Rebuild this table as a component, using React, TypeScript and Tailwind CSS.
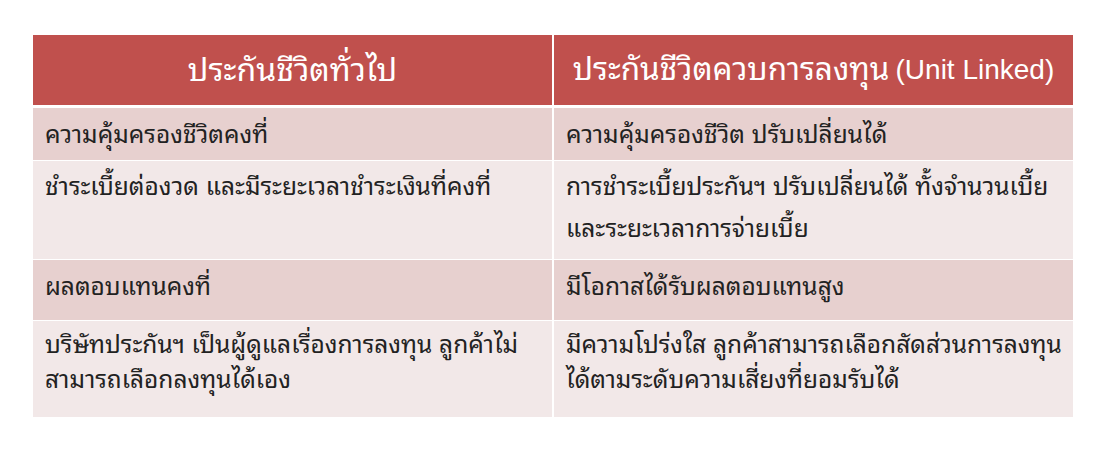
const rows = [
  {
    left: ['ความคุ้มครองชีวิตคงที่'],
    right: ['ความคุ้มครองชีวิต ปรับเปลี่ยนได้'],
    h: 'h-[52px]',
    bg: 'bg-[#e7d0cf]',
    lead: 'leading-[42px] pt-[6px]',
  },
  {
    left: ['ชำระเบี้ยต่องวด และมีระยะเวลาชำระเงินที่คงที่'],
    right: ['การชำระเบี้ยประกันฯ ปรับเปลี่ยนได้ ทั้งจำนวนเบี้ย', 'และระยะเวลาการจ่ายเบี้ย'],
    h: 'h-[98px]',
    bg: 'bg-[#f2e8e8]',
    lead: 'leading-[42px] pt-[5px]',
  },
  {
    left: ['ผลตอบแทนคงที่'],
    right: ['มีโอกาสได้รับผลตอบแทนสูง'],
    h: 'h-[60px]',
    bg: 'bg-[#e7d0cf]',
    lead: 'leading-[42px] pt-[6px]',
  },
  {
    left: ['บริษัทประกันฯ เป็นผู้ดูแลเรื่องการลงทุน ลูกค้าไม่', 'สามารถเลือกลงทุนได้เอง'],
    right: ['มีความโปร่งใส ลูกค้าสามารถเลือกสัดส่วนการลงทุน', 'ได้ตามระดับความเสี่ยงที่ยอมรับได้'],
    h: 'h-[96px]',
    bg: 'bg-[#f2e8e8]',
    lead: 'leading-[35px] pt-[6px]',
  },
];

function Cell({ lines, bg, lead }: { lines: string[]; bg: string; lead: string }) {
  return (
    <div className={`w-[519px] h-full px-3 ${bg} ${lead}`}>
      {lines.map((l, i) => (
        <div key={i} className="whitespace-nowrap">{l}</div>
      ))}
    </div>
  );
}

export default function App() {
  return (
    <div className="w-[1104px] h-[463px] bg-white pt-[35px] pl-[33px] text-[24.5px] text-[#222222] font-['Liberation_Sans','Noto_Sans_Thai_Looped',sans-serif]">
      <div className="w-[1040px] flex flex-col">
        <div className="flex gap-[2px] h-[70px] mb-[3px]">
          <div className="w-[519px] bg-[#c0504d] text-white text-[32px] flex items-center justify-center">
            ประกันชีวิตทั่วไป
          </div>
          <div className="w-[519px] bg-[#c0504d] text-white text-[31.5px] flex items-center justify-center gap-[6px]">
            <span>ประกันชีวิตควบการลงทุน</span>
            <span className="text-[28px]">(Unit Linked)</span>
          </div>
        </div>
        {rows.map((r, i) => (
          <div key={i} className={`flex gap-[2px] ${r.h} ${i < rows.length - 1 ? 'mb-px' : ''}`}>
            <Cell lines={r.left} bg={r.bg} lead={r.lead} />
            <Cell lines={r.right} bg={r.bg} lead={r.lead} />
          </div>
        ))}
      </div>
    </div>
  );
}
